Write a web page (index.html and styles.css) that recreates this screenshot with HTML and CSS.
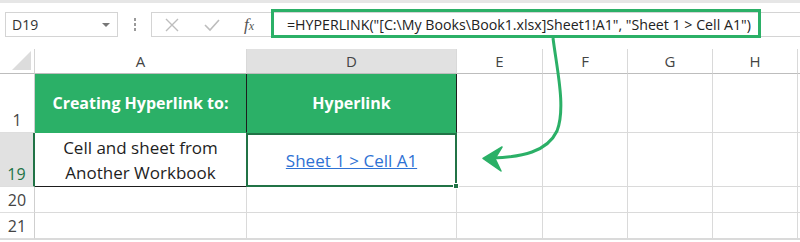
FILE: index.html
```html
<!DOCTYPE html>
<html lang="en">
<head>
  <meta charset="UTF-8">
  <title>HYPERLINK to another workbook</title>
  <link rel="stylesheet" href="styles.css">
</head>
<body>

  <div class="toolbar">
    <div class="namebox">
      <span>D19</span>
      <span class="caret"></span>
    </div>
    <div class="grip"><i></i><i></i><i></i></div>
    <div class="formulabar">
      <div class="fbtns">
        <svg width="14" height="14" viewBox="0 0 14 14"><path d="M1 1 L13 13 M13 1 L1 13" stroke="#bdbdbd" stroke-width="1.4" fill="none"/></svg>
        <svg width="16" height="14" viewBox="0 0 16 14"><path d="M1 7 L6 12 L15 2" stroke="#bdbdbd" stroke-width="1.6" fill="none"/></svg>
        <span class="fx">f<small>x</small></span>
      </div>
      <div class="formula">=HYPERLINK("[C:\My Books\Book1.xlsx]Sheet1!A1", "Sheet 1 &gt; Cell A1")</div>
    </div>
  </div>

  <div class="sheet">
    <div class="corner"><span></span></div>
    <div class="colhead">A</div>
    <div class="colhead sel">D</div>
    <div class="colhead">E</div>
    <div class="colhead">F</div>
    <div class="colhead">G</div>
    <div class="colhead">H</div>
    <div class="colhead"></div>

    <div class="rowhead">1</div>
    <div class="cell title">Creating Hyperlink to:</div>
    <div class="cell title">Hyperlink</div>
    <div class="cell"></div><div class="cell"></div><div class="cell"></div><div class="cell"></div><div class="cell"></div>

    <div class="rowhead sel">19</div>
    <div class="cell boxed">Cell and sheet from<br>Another Workbook</div>
    <div class="cell active"><a href="#">Sheet 1 &gt; Cell A1</a><span class="handle"></span></div>
    <div class="cell"></div><div class="cell"></div><div class="cell"></div><div class="cell"></div><div class="cell"></div>

    <div class="rowhead">20</div>
    <div class="cell"></div><div class="cell"></div><div class="cell"></div><div class="cell"></div><div class="cell"></div><div class="cell"></div><div class="cell"></div>

    <div class="rowhead">21</div>
    <div class="cell"></div><div class="cell"></div><div class="cell"></div><div class="cell"></div><div class="cell"></div><div class="cell"></div><div class="cell"></div>
  </div>

  <!-- callout: green box round the formula and the arrow down to D19 -->
  <div class="callout"></div>
  <svg class="arrow" width="800" height="242" viewBox="0 0 800 242">
    <path d="M553 38 C 557 70, 566 108, 557 131 C 547 152, 522 157, 492 158" stroke="#2bb067" stroke-width="3" fill="none"/>
    <path d="M483 158.5 L502 147 L495 158.5 L501 171 Z" fill="#2bb067" stroke="#2bb067" stroke-width="1.5" stroke-linejoin="round"/>
  </svg>

</body>
</html>
```

FILE: styles.css
```css
* {
  box-sizing: border-box;
}

body {
  margin: 0;
  width: 800px;
  height: 242px;
  overflow: hidden;
  background: #fff;
  font-family: "Open Sans", "Noto Sans", sans-serif;
  color: #1e1e1e;
  position: relative;
}

.toolbar {
  height: 49px;
  border-top: 3px solid #e6e6e6;
  display: flex;
  align-items: flex-start;
  padding: 9px 0 0 5px;
}

.namebox {
  width: 113px;
  height: 25px;
  border: 1px solid #d4d4d4;
  display: flex;
  align-items: center;
  justify-content: space-between;
  padding: 0 7px 0 6px;
  font-size: 14px;
  color: #333;
}

.caret {
  width: 0;
  height: 0;
  border-left: 4px solid transparent;
  border-right: 4px solid transparent;
  border-top: 4px solid #777;
}

.grip {
  width: 33px;
  height: 25px;
  display: flex;
  flex-direction: column;
  align-items: center;
  justify-content: center;
  gap: 2px;
}

.grip i {
  width: 2px;
  height: 3px;
  background: #9a9a9a;
}

.formulabar {
  flex: 1;
  height: 25px;
  border: 1px solid #d4d4d4;
  border-right: none;
  display: flex;
  align-items: center;
}

.fbtns {
  width: 120px;
  display: flex;
  align-items: center;
  gap: 25px;
  padding-left: 13px;
}

.fx {
  font-family: "Liberation Serif", serif;
  font-style: italic;
  font-size: 17px;
  color: #555;
  margin-left: -1px;
}

.fx small {
  font-size: 12px;
}

.formula {
  padding-left: 15px;
  font-size: 14.2px;
  color: #222;
  white-space: nowrap;
}

.sheet {
  display: grid;
  grid-template-columns: 35px 212px 210px 86px 85px 85px 85px 10px;
  grid-template-rows: 25px 59px 54px 26px 26px;
  border-bottom: 1px solid #dadada;
}

.corner {
  border-right: 1px solid #d4d4d4;
  border-bottom: 1px solid #bdbdbd;
  position: relative;
}

.corner span {
  position: absolute;
  right: 3px;
  bottom: 3px;
  width: 0;
  height: 0;
  border-left: 19px solid transparent;
  border-bottom: 19px solid #dcdcdc;
}

.colhead {
  border-right: 1px solid #d9d9d9;
  border-bottom: 1px solid #bdbdbd;
  display: flex;
  align-items: center;
  justify-content: center;
  font-size: 15px;
  color: #444;
}

.colhead.sel {
  background: #e1e1e1;
}

.rowhead {
  border-right: 1px solid #cfcfcf;
  border-bottom: 1px solid #dedede;
  display: flex;
  align-items: flex-end;
  justify-content: center;
  font-size: 16px;
  line-height: 24px;
  color: #444;
}

.rowhead.sel {
  background: #e1e1e1;
  color: #217346;
  border-right: 2px solid #217346;
}

.cell {
  border-right: 1px solid #dadada;
  border-bottom: 1px solid #dadada;
  display: flex;
  align-items: center;
  justify-content: center;
  text-align: center;
  font-size: 17px;
  line-height: 25px;
}

.cell.title {
  background: #2bb067;
  color: #fff;
  font-weight: bold;
  font-size: 16px;
  border-bottom-color: #2bb067;
  border-right: 1px solid #1d1d1d;
}

.cell.boxed {
  border-right: 1px solid #1d1d1d;
  border-bottom: 1px solid #1d1d1d;
}

.cell.active {
  position: relative;
  border: 2px solid #217346;
  margin-left: -1px;
}

.cell.active a {
  color: #2f72d4;
  text-decoration: underline;
}

.handle {
  position: absolute;
  right: -4px;
  bottom: -4px;
  width: 6px;
  height: 6px;
  background: #217346;
  border: 1px solid #fff;
}

.callout {
  position: absolute;
  left: 271px;
  top: 9px;
  width: 490px;
  height: 29px;
  border: 3px solid #2bb067;
}

.arrow {
  position: absolute;
  left: 0;
  top: 0;
  pointer-events: none;
}
```
